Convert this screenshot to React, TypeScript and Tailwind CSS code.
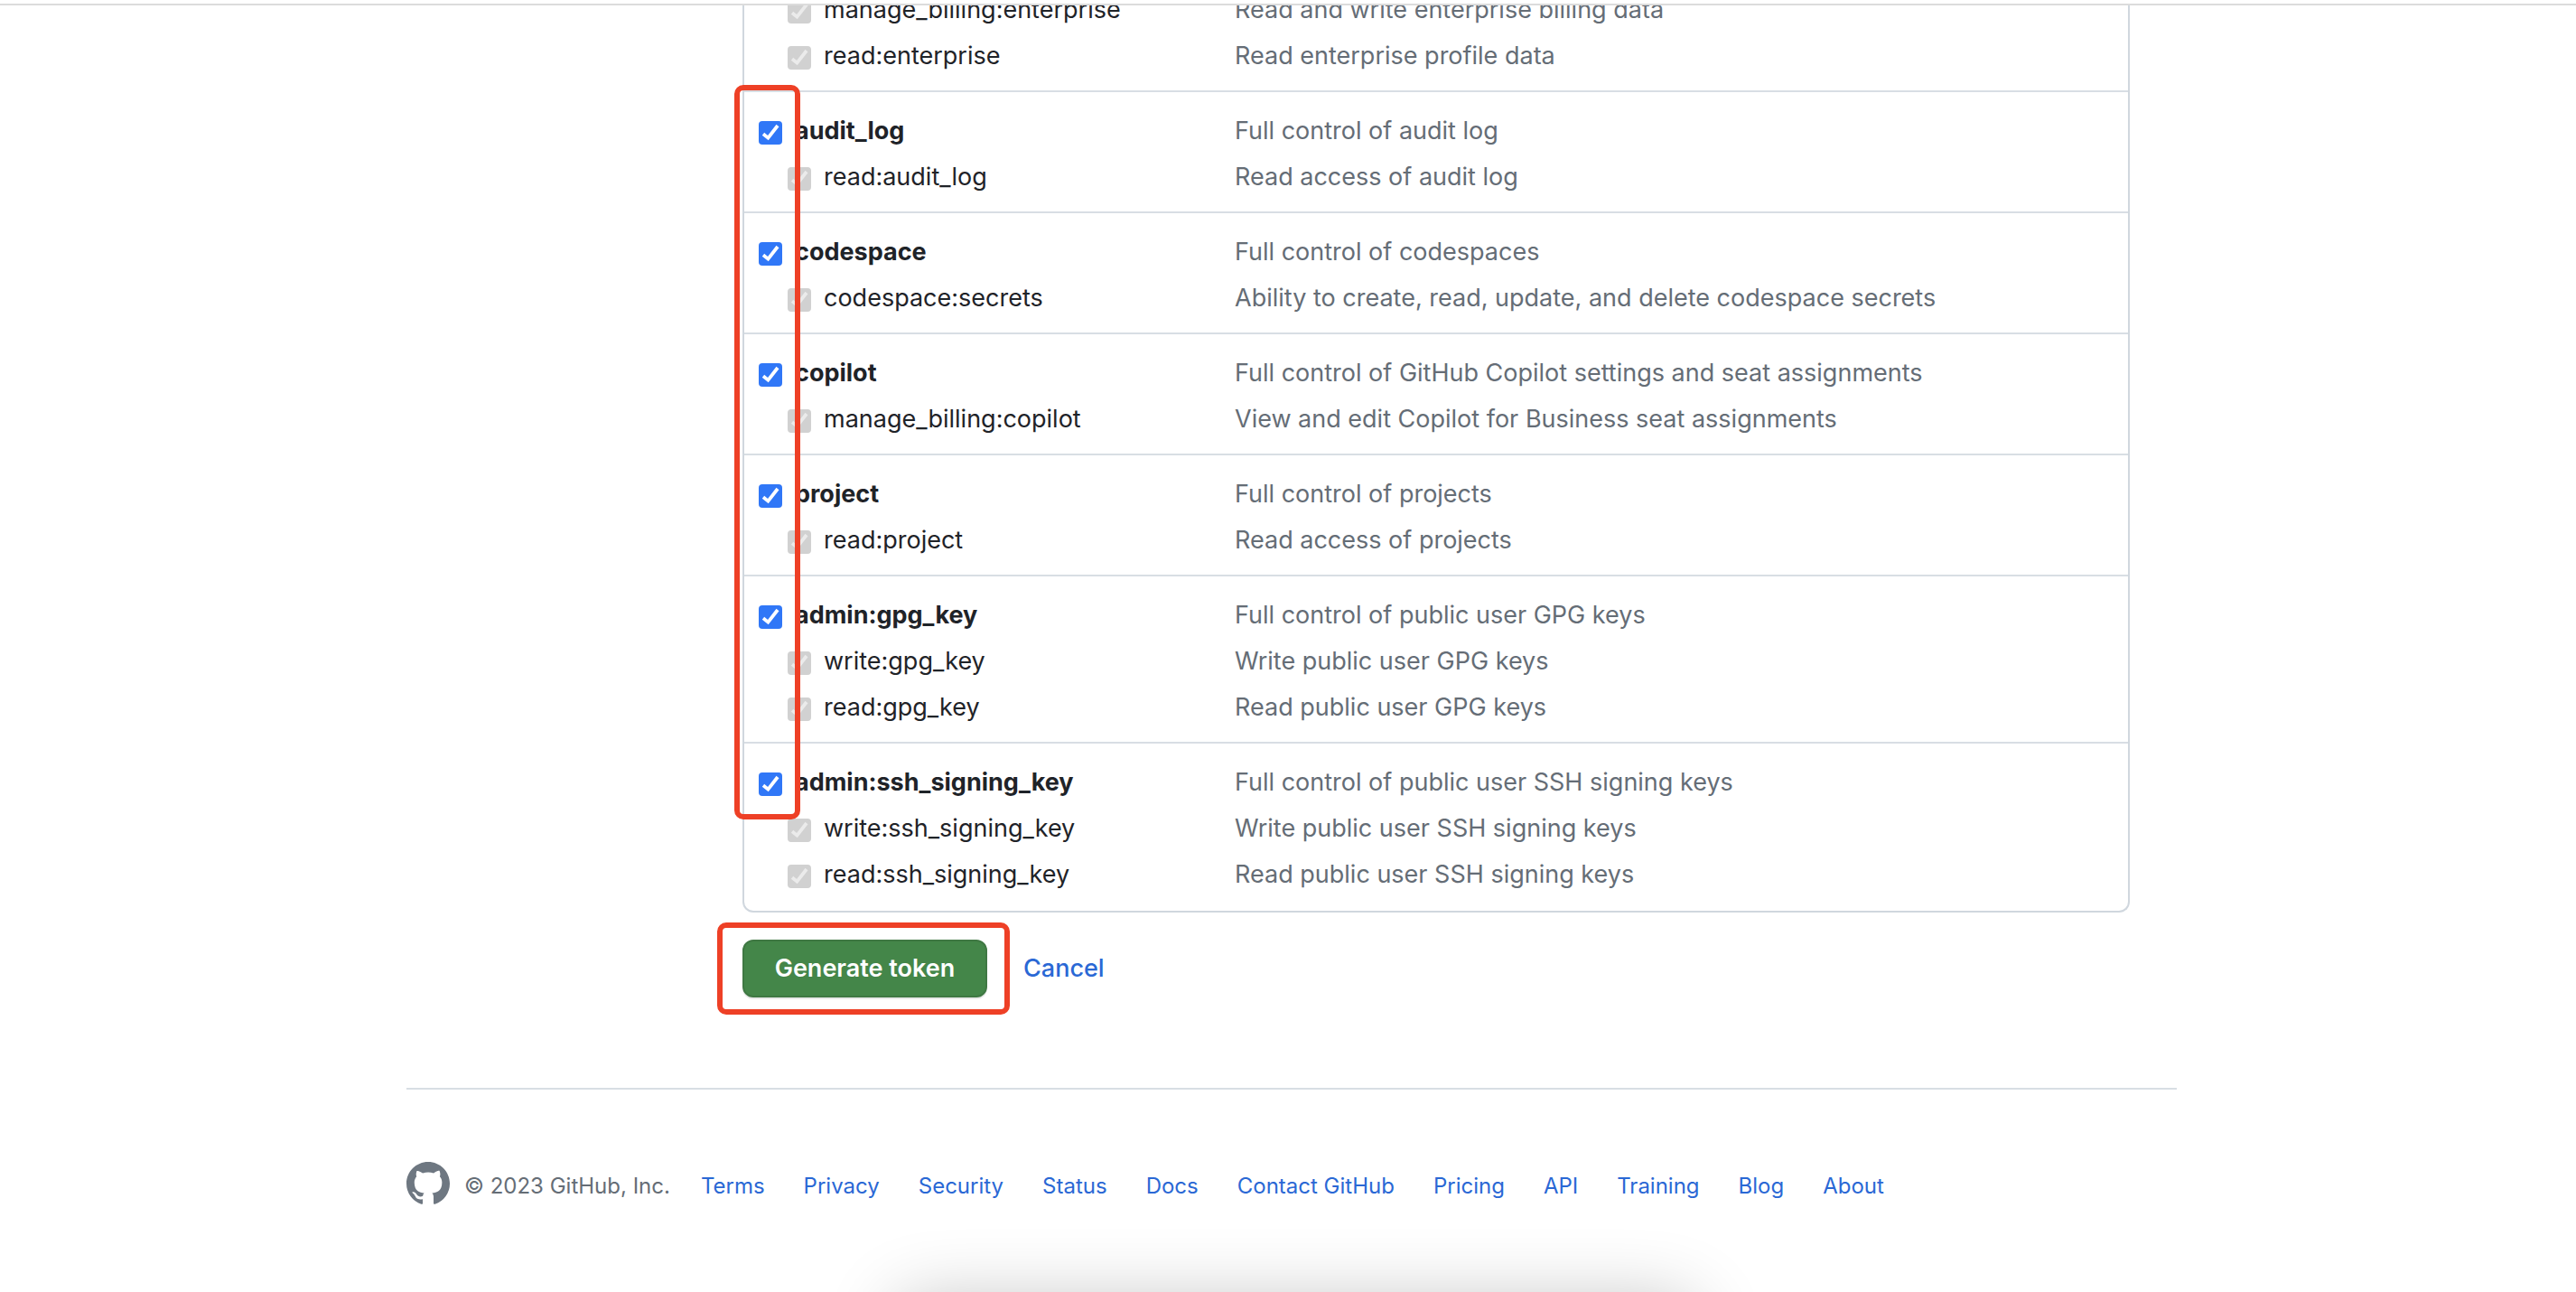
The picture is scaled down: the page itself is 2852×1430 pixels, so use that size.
type Scope = { name: string; description: string };
type ScopeGroup = { parent?: Scope; children: Scope[] };

const groups: ScopeGroup[] = [
  {
    children: [
      { name: "manage_billing:enterprise", description: "Read and write enterprise billing data" },
      { name: "read:enterprise", description: "Read enterprise profile data" },
    ],
  },
  {
    parent: { name: "audit_log", description: "Full control of audit log" },
    children: [{ name: "read:audit_log", description: "Read access of audit log" }],
  },
  {
    parent: { name: "codespace", description: "Full control of codespaces" },
    children: [
      { name: "codespace:secrets", description: "Ability to create, read, update, and delete codespace secrets" },
    ],
  },
  {
    parent: { name: "copilot", description: "Full control of GitHub Copilot settings and seat assignments" },
    children: [
      { name: "manage_billing:copilot", description: "View and edit Copilot for Business seat assignments" },
    ],
  },
  {
    parent: { name: "project", description: "Full control of projects" },
    children: [{ name: "read:project", description: "Read access of projects" }],
  },
  {
    parent: { name: "admin:gpg_key", description: "Full control of public user GPG keys" },
    children: [
      { name: "write:gpg_key", description: "Write public user GPG keys" },
      { name: "read:gpg_key", description: "Read public user GPG keys" },
    ],
  },
  {
    parent: { name: "admin:ssh_signing_key", description: "Full control of public user SSH signing keys" },
    children: [
      { name: "write:ssh_signing_key", description: "Write public user SSH signing keys" },
      { name: "read:ssh_signing_key", description: "Read public user SSH signing keys" },
    ],
  },
];

const footerLinks = [
  "Terms",
  "Privacy",
  "Security",
  "Status",
  "Docs",
  "Contact GitHub",
  "Pricing",
  "API",
  "Training",
  "Blog",
  "About",
];

function Checkbox({ id, disabled }: { id: string; disabled?: boolean }) {
  return (
    <span className="mt-1 grid size-[26px] shrink-0">
      <input
        id={id}
        type="checkbox"
        defaultChecked
        disabled={disabled}
        className="peer col-start-1 row-start-1 size-[26px] appearance-none rounded border-2 border-[#767676] bg-white checked:border-0 checked:bg-[#3077f7] disabled:bg-[#d1d1d1]"
      />
      <svg
        viewBox="0 0 26 26"
        aria-hidden="true"
        className="pointer-events-none invisible col-start-1 row-start-1 size-[26px] text-white peer-checked:visible peer-disabled:text-[#ebebeb]"
      >
        <path d="M5 14.2 10.4 18.6 21 5" fill="none" stroke="currentColor" strokeWidth="3.8" />
      </svg>
    </span>
  );
}

function ScopeRow({ scope, nested }: { scope: Scope; nested?: boolean }) {
  return (
    <li className="grid grid-cols-[527px_1fr] leading-[51px]">
      <div className={nested ? "flex items-center gap-3.5 pl-8" : "flex items-center gap-3.5"}>
        <Checkbox id={scope.name} disabled={nested} />
        <label htmlFor={scope.name} className={nested ? "" : "font-bold"}>
          {scope.name}
        </label>
      </div>
      <span className="text-[#656d76]">{scope.description}</span>
    </li>
  );
}

function MarkGithub() {
  return (
    <svg viewBox="0 0 16 16" className="size-12 shrink-0" fill="#6e7781" role="img" aria-label="GitHub">
      <path d="M8 0c4.42 0 8 3.58 8 8a8.013 8.013 0 0 1-5.45 7.59c-.4.08-.55-.17-.55-.38 0-.27.01-1.13.01-2.2 0-.75-.25-1.23-.54-1.48 1.78-.2 3.65-.88 3.65-3.95 0-.88-.31-1.59-.82-2.15.08-.2.36-1.02-.08-2.12 0 0-.67-.22-2.2.82-.64-.18-1.32-.27-2-.27-.68 0-1.36.09-2 .27-1.53-1.03-2.2-.82-2.2-.82-.44 1.1-.16 1.92-.08 2.12-.51.56-.82 1.28-.82 2.15 0 3.06 1.86 3.75 3.64 3.95-.23.2-.44.55-.51 1.07-.46.21-1.61.55-2.33-.66-.15-.24-.6-.83-1.23-.82-.67.01-.27.38.01.53.34.19.73.9.82 1.13.16.45.68 1.31 2.69.94 0 .67.01 1.3.01 1.49 0 .21-.15.45-.55.38A7.995 7.995 0 0 1 0 8c0-4.42 3.58-8 8-8Z" />
    </svg>
  );
}

export default function App() {
  return (
    <div className="relative min-h-screen overflow-hidden bg-white font-[Inter,sans-serif] text-[27px] text-[#1f2328]">
      <header className="h-1.5 border-b-2 border-[#dcdcdc]" />
      <div className="overflow-hidden pl-2">
        <div className="mx-auto max-w-[1960px]">
          <main className="pr-[52px] pl-[372px]">
            <form onSubmit={(event) => event.preventDefault()}>
              <div className="relative -mt-[38px] rounded-b-xl border-2 border-t-0 border-[#d0d7de] pb-0.5">
                {groups.map((group) => (
                  <ul
                    key={group.children[0].name}
                    className="border-b-2 border-[#d8dee4] px-4 pt-[17px] pb-[13px] last-of-type:border-b-0"
                  >
                    {group.parent && <ScopeRow scope={group.parent} />}
                    {group.children.map((scope) => (
                      <ScopeRow key={scope.name} scope={scope} nested />
                    ))}
                  </ul>
                ))}
                <div className="pointer-events-none absolute top-[126px] bottom-[101px] -left-[11px] w-[73px] rounded-[10px] border-6 border-[#ee4026]" />
              </div>
              <div className="mt-[30px] flex items-center gap-10">
                <div className="relative">
                  <button
                    type="submit"
                    className="h-16 min-w-[271px] rounded-xl border-2 border-[#3f7843] bg-[#448649] px-8 font-semibold text-white shadow-[0_2px_0_rgba(31,35,40,0.1)]"
                  >
                    Generate token
                  </button>
                  <div className="pointer-events-none absolute -top-[19px] -right-[25px] -bottom-[19px] -left-7 rounded-[10px] border-6 border-[#ee4026]" />
                </div>
                <a href="#cancel" className="font-medium text-[#2a68d5]">
                  Cancel
                </a>
              </div>
            </form>
          </main>
          <footer className="mt-25 flex items-center gap-4 border-t-2 border-[#d8dee4] pt-20 text-2xl">
            <MarkGithub />
            <span className="mt-1.5 mr-[18px] text-[#656d76]">© 2023 GitHub, Inc.</span>
            <nav className="mt-1.5 flex flex-wrap gap-x-[43px]">
              {footerLinks.map((link) => (
                <a key={link} href={"#" + link.toLowerCase().replace(" ", "-")} className="text-[#2a68d5]">
                  {link}
                </a>
              ))}
            </nav>
          </footer>
        </div>
      </div>
      <div className="pointer-events-none absolute top-full left-1/2 ml-2 h-40 w-[884px] -translate-x-1/2 rounded-3xl shadow-[0_10px_80px_rgba(0,0,0,0.24)]" />
    </div>
  );
}
